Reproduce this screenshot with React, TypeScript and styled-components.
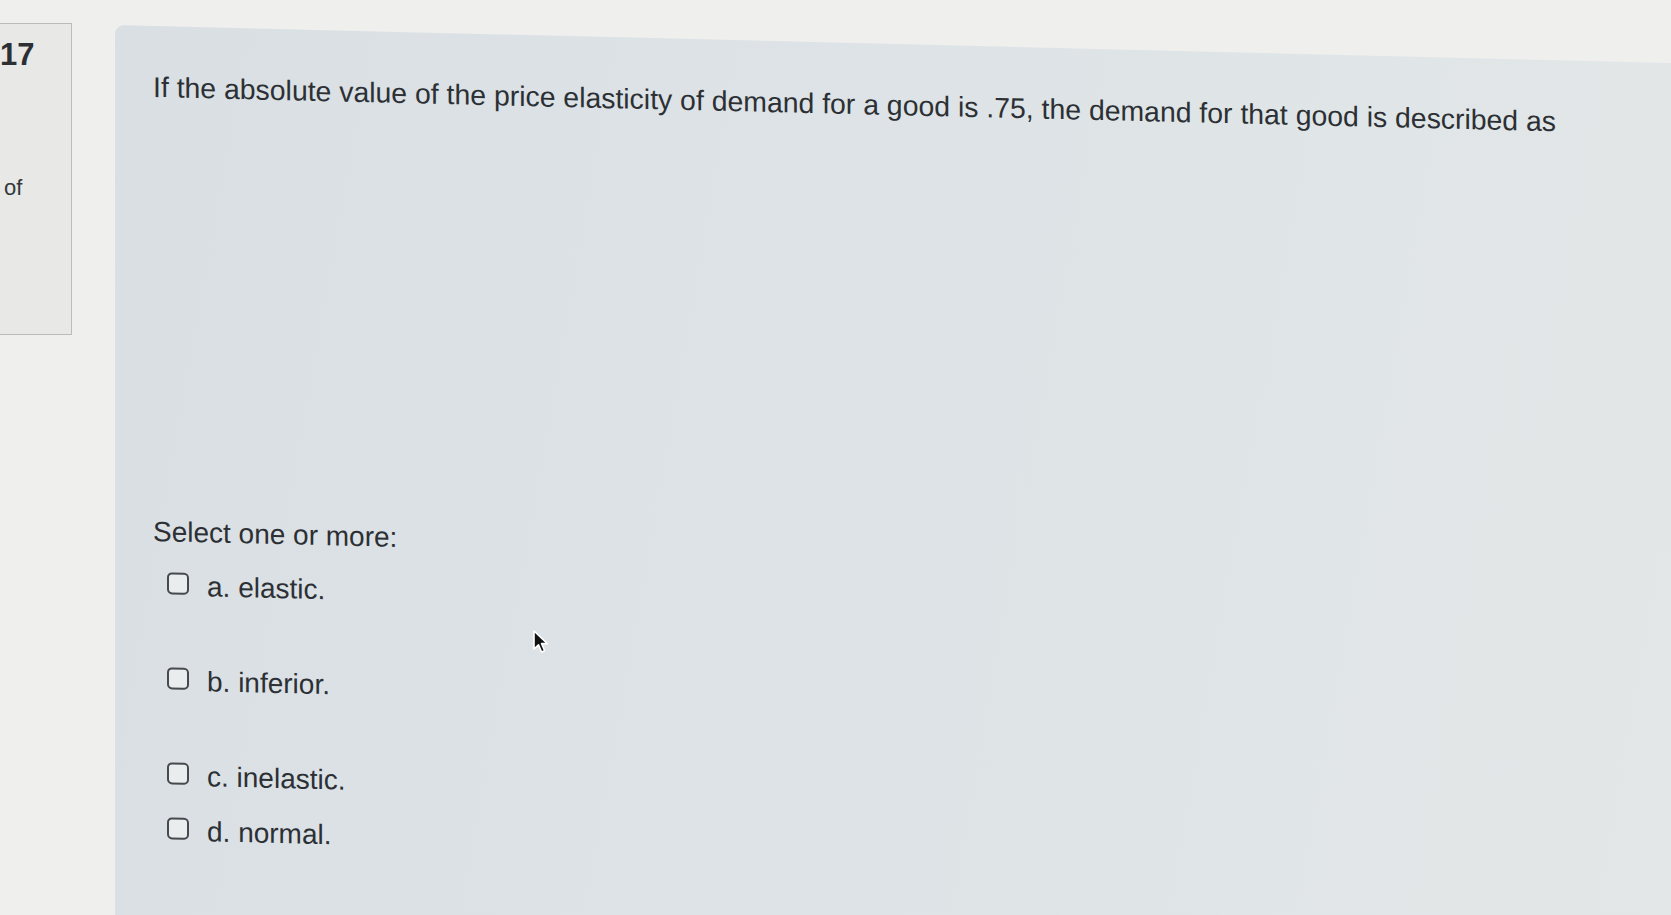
import React from "react";
import styled, { createGlobalStyle } from "styled-components";

const GlobalStyle = createGlobalStyle`
  html, body {
    margin: 0;
    padding: 0;
    background: #efefed;
    overflow: hidden;
  }
  body {
    font-family: "Liberation Sans", Arial, Helvetica, sans-serif;
    color: #2c3034;
  }
`;

const Page = styled.div`
  position: relative;
  display: flex;
  align-items: flex-start;
  height: 915px;
  overflow: hidden;
`;

const InfoPanel = styled.aside`
  box-sizing: border-box;
  flex: none;
  width: 72px;
  height: 312px;
  margin-top: 23px;
  padding-top: 15px;
  border: 1px solid #bcbcbc;
  border-left: none;
  background: #e8e8e7;
  display: flex;
  flex-direction: column;
  overflow: hidden;
`;

const QNumber = styled.span`
  font-size: 31px;
  font-weight: 700;
  line-height: 1;
  color: #2c2f33;
`;

const Marked = styled.span`
  margin-top: 107px;
  padding-left: 4px;
  font-size: 22px;
  line-height: 1;
  color: #34383c;
`;

const Card = styled.main`
  box-sizing: border-box;
  flex: 1;
  min-height: 1000px;
  margin: 25px 0 0 43px;
  padding: 44px 0 0 38px;
  border-top-left-radius: 9px;
  background: linear-gradient(100deg, #d9dfe3 0%, #dde3e6 45%, #e3e7e8 100%);
  transform: skewY(1.4deg);
  transform-origin: 0 0;
`;

const QuestionText = styled.p`
  margin: 0;
  font-size: 28.4px;
  line-height: 34px;
  white-space: nowrap;
`;

const Prompt = styled.div`
  margin-top: 411px;
  font-size: 28px;
  line-height: 34px;
`;

const Options = styled.div`
  display: flex;
  flex-direction: column;
`;

const OptionRow = styled.label<{ $space: number }>`
  display: flex;
  align-items: flex-start;
  gap: 18px;
  margin-top: ${(p) => p.$space}px;
  padding-left: 14px;
  font-size: 28px;
  line-height: 34px;
`;

const Box = styled.input`
  appearance: none;
  box-sizing: border-box;
  flex: none;
  width: 22px;
  height: 22px;
  margin: 3px 0 0;
  border: 2px solid #464a4e;
  border-radius: 5px;
  background: #e9edee;
`;

const Pointer = styled.svg`
  position: absolute;
  left: 532px;
  top: 629px;
  width: 17px;
  height: 26px;
`;

const answers = [
  { key: "a", text: "a. elastic.", space: 20 },
  { key: "b", text: "b. inferior.", space: 61 },
  { key: "c", text: "c. inelastic.", space: 61 },
  { key: "d", text: "d. normal.", space: 21 },
];

export default function App() {
  return (
    <>
      <GlobalStyle />
      <Page>
        <InfoPanel>
          <QNumber>17</QNumber>
          <Marked>of</Marked>
        </InfoPanel>
        <Card>
          <QuestionText>
            If the absolute value of the price elasticity of demand for a good is .75, the demand for that good is described as
          </QuestionText>
          <Prompt>Select one or more:</Prompt>
          <Options>
            {answers.map((a) => (
              <OptionRow key={a.key} $space={a.space}>
                <Box type="checkbox" name={a.key} />
                <span>{a.text}</span>
              </OptionRow>
            ))}
          </Options>
        </Card>
        <Pointer viewBox="0 0 17 26">
          <path
            d="M2 2 L2 20 L6.5 15.8 L9.6 23 L12.6 21.7 L9.6 14.6 L15.4 14.6 Z"
            fill="#111"
            stroke="#fff"
            strokeWidth="1.6"
            strokeLinejoin="round"
          />
        </Pointer>
      </Page>
    </>
  );
}
